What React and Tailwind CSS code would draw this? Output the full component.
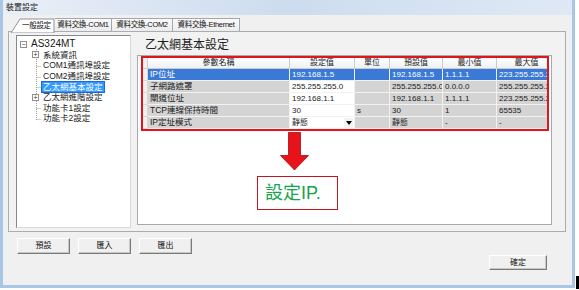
import React from "react";

const rows = [
  { name: "IP位址", val: "192.168.1.5", unit: "", def: "192.168.1.5", min: "1.1.1.1", max: "223.255.255.255", sel: true },
  { name: "子網路遮罩", val: "255.255.255.0", unit: "", def: "255.255.255.0", min: "0.0.0.0", max: "255.255.255.255" },
  { name: "閘道位址", val: "192.168.1.1", unit: "", def: "192.168.1.1", min: "1.1.1.1", max: "223.255.255.255" },
  { name: "TCP連線保持時間", val: "30", unit: "s", def: "30", min: "1", max: "65535" },
  { name: "IP定址模式", val: "靜態", unit: "", def: "靜態", min: "-", max: "-", combo: true },
];

const treeItems = [
  { label: "AS324MT", level: 0, box: "-" },
  { label: "系統資訊", level: 1, box: "+" },
  { label: "COM1通訊埠設定", level: 1 },
  { label: "COM2通訊埠設定", level: 1 },
  { label: "乙太網基本設定", level: 1, sel: true },
  { label: "乙太網進階設定", level: 1, box: "+" },
  { label: "功能卡1設定", level: 1 },
  { label: "功能卡2設定", level: 1 },
];

function Tree() {
  return (
    <div className="relative w-[115px] h-[193px] bg-white border border-t-[#828790] border-l-[#828790] border-r-[#d8d8d8] border-b-[#d8d8d8]">
      <svg className="absolute left-0 top-0" width="115" height="193">
        <g stroke="#a0a0a0" strokeWidth="1" strokeDasharray="1 1">
          <line x1="19.5" y1="13" x2="19.5" y2="84" />
          <line x1="19.5" y1="30.5" x2="24" y2="30.5" />
          <line x1="19.5" y1="41.5" x2="24" y2="41.5" />
          <line x1="19.5" y1="51.5" x2="24" y2="51.5" />
          <line x1="19.5" y1="72.5" x2="24" y2="72.5" />
          <line x1="19.5" y1="83.5" x2="24" y2="83.5" />
        </g>
      </svg>
      <div className="relative flex flex-col pt-[3px]">
        {treeItems.map((it) => (
          <div
            key={it.label}
            className={`flex items-center h-[10.6px] ${it.level === 0 ? "pl-[3px]" : "pl-[15px]"}`}
          >
            {it.box ? (
              <span className="w-[7px] h-[7px] border border-[#919191] bg-white flex items-center justify-center text-[7px] leading-none text-[#333] mr-[3px]">
                {it.box === "-" ? "−" : "+"}
              </span>
            ) : (
              <span className="w-[10px]" />
            )}
            <span
              className={`leading-[10px] whitespace-nowrap px-px ${
                it.sel ? "bg-[#3399ff] text-white outline outline-1 outline-[#1a6ad0]" : "text-[#1a1a1a]"
              } ${it.level === 0 ? "text-[10px]" : "text-[8.5px]"}`}
            >
              {it.label}
            </span>
          </div>
        ))}
      </div>
    </div>
  );
}

function Cell({ children, className = "" }) {
  return (
    <div className={`flex items-center overflow-hidden whitespace-nowrap border-r border-b border-[#f2f2f2] ${className}`}>
      {children}
    </div>
  );
}

function Grid() {
  const heads = ["參數名稱", "設定值", "單位", "預設值", "最小值", "最大值"];
  return (
    <div className="w-[408px] h-[75px] border-2 border-[#e3141c] overflow-hidden">
      <div className="grid grid-cols-[5px_142px_65px_35px_53px_54px_60px] grid-rows-[11px_12px_12px_12px_12px_12px]">
        <div className="bg-[#f0f0f0] border-r border-b border-[#d0d0d0]" />
        {heads.map((h) => (
          <div
            key={h}
            className="flex items-center justify-center text-[8px] leading-none text-[#222] bg-gradient-to-b from-white to-[#eef0f3] border-r border-b border-[#c9cbd0]"
          >
            {h}
          </div>
        ))}
        {rows.map((r) => {
          const base = r.sel ? "bg-[#3a7ad6] text-white" : "bg-[#d4d4d4] text-[#1a1a1a]";
          const valCls = r.sel ? "bg-[#3a7ad6] text-white" : "bg-white text-[#1a1a1a]";
          return (
            <React.Fragment key={r.name}>
              <div className="bg-[#f0f0f0] border-r border-b border-[#d8d8d8]" />
              <Cell className={`${base} pl-[2px] text-[8.5px]`}>{r.name}</Cell>
              <Cell className={`${valCls} pl-[2px] text-[8px] justify-between`}>
                <span>{r.val}</span>
                {r.combo && (
                  <span className="w-[9px] h-[10px] mr-px bg-[#f3f3f3] flex items-center justify-center">
                    <svg width="6" height="4" viewBox="0 0 6 4">
                      <path d="M0 0H6L3 4Z" fill="#000" />
                    </svg>
                  </span>
                )}
              </Cell>
              <Cell className={`${base} pl-[2px] text-[8px]`}>{r.unit}</Cell>
              <Cell className={`${base} pl-[2px] text-[8px]`}>{r.def}</Cell>
              <Cell className={`${base} pl-[2px] text-[8px]`}>{r.min}</Cell>
              <Cell className={`${base} pl-[2px] text-[8px]`}>{r.max}</Cell>
            </React.Fragment>
          );
        })}
      </div>
    </div>
  );
}

function Btn({ children, className = "" }) {
  return (
    <div
      className={`flex items-center justify-center text-[8px] text-[#111] bg-[#f0f0f0] border border-t-white border-l-white border-r-[#7a7a7a] border-b-[#7a7a7a] shadow-[inset_-1px_-1px_0_#c8c8c8] ${className}`}
    >
      {children}
    </div>
  );
}

function Tab({ w, children }) {
  return (
    <div
      className={`${w} h-[13px] border border-b-0 border-l-0 border-[#a3a7ae] bg-gradient-to-b from-[#fafafa] to-[#ececec] flex items-center justify-center text-[7.5px] tracking-[-0.3px] leading-none text-[#111] whitespace-nowrap overflow-hidden`}
    >
      {children}
    </div>
  );
}

export default function App() {
  return (
    <div className="relative w-[579px] h-[290px] bg-white overflow-hidden font-['Liberation_Sans','Noto_Sans_CJK_TC',sans-serif]">
      <div className="w-[575px] h-[288px] flex flex-col border-l-[3px] border-r-[3px] border-b-[3px] border-[#aac6e6]">
        <div className="h-[15px] flex items-center pl-[3px] bg-gradient-to-r from-[#e9eff7] via-[#cddcee] to-[#dfe9f5]">
          <span className="text-[8px] leading-none text-[#222]">裝置設定</span>
        </div>
        <div className="flex-1 bg-[#f0f0f0] flex flex-col">
          <div className="ml-[5px] mt-[2px] flex flex-col">
            <div className="h-[14px] flex items-end">
              <div className="relative w-[47px] h-[14px] -mb-px z-10">
                <svg className="absolute left-0 top-0" width="47" height="15">
                  <path d="M3 15L12 1H46V15Z" fill="#ffffff" stroke="#8e939b" strokeWidth="1" />
                </svg>
                <span className="absolute left-[14px] top-[3px] text-[7.5px] tracking-[-0.3px] leading-[9px] text-[#111] whitespace-nowrap">一般設定</span>
              </div>
              <Tab w="w-[57px]">資料交換-COM1</Tab>
              <Tab w="w-[61px]">資料交換-COM2</Tab>
              <Tab w="w-[67px]">資料交換-Ethernet</Tab>
            </div>
            <div className="w-[558px] h-[201px] border border-[#a8acb3] bg-[#f2f2f2] flex pt-[3px] pl-[7px]">
              <Tree />
              <div className="ml-[6px] w-[415px] flex flex-col">
                <div className="h-[20px] flex items-center pl-[8px]">
                  <span className="text-[12px] leading-none text-[#222]">乙太網基本設定</span>
                </div>
                <div className="h-[170px] bg-white border border-[#a9a9a9] flex flex-col pl-[3px]">
                  <Grid />
                  <svg className="ml-[139px] mt-px" width="30" height="39" viewBox="0 0 30 39">
                    <path d="M8.5 0.5H20.5V23.5H28.5L14.5 38L0.5 23.5H8.5Z" fill="#e8121b" stroke="#a10b10" strokeWidth="0.8" />
                  </svg>
                  <div className="ml-[116px] mt-[5px] w-[81px] h-[34px] border-[1.5px] border-[#c5161e] flex items-center pl-[7px]">
                    <span className="text-[18px] leading-none text-[#16a54a]">設定IP.</span>
                  </div>
                </div>
              </div>
            </div>
          </div>
          <div className="flex ml-[14px] mt-[6px] gap-[8px]">
            <Btn className="w-[53px] h-[16px]">預設</Btn>
            <Btn className="w-[53px] h-[16px]">匯入</Btn>
            <Btn className="w-[53px] h-[16px]">匯出</Btn>
          </div>
          <div className="flex justify-end mr-[25px] mt-px">
            <Btn className="w-[58px] h-[15px]">確定</Btn>
          </div>
        </div>
      </div>
      <div className="absolute left-[576px] top-[276px] w-[3px] h-[13px] bg-black" />
    </div>
  );
}
